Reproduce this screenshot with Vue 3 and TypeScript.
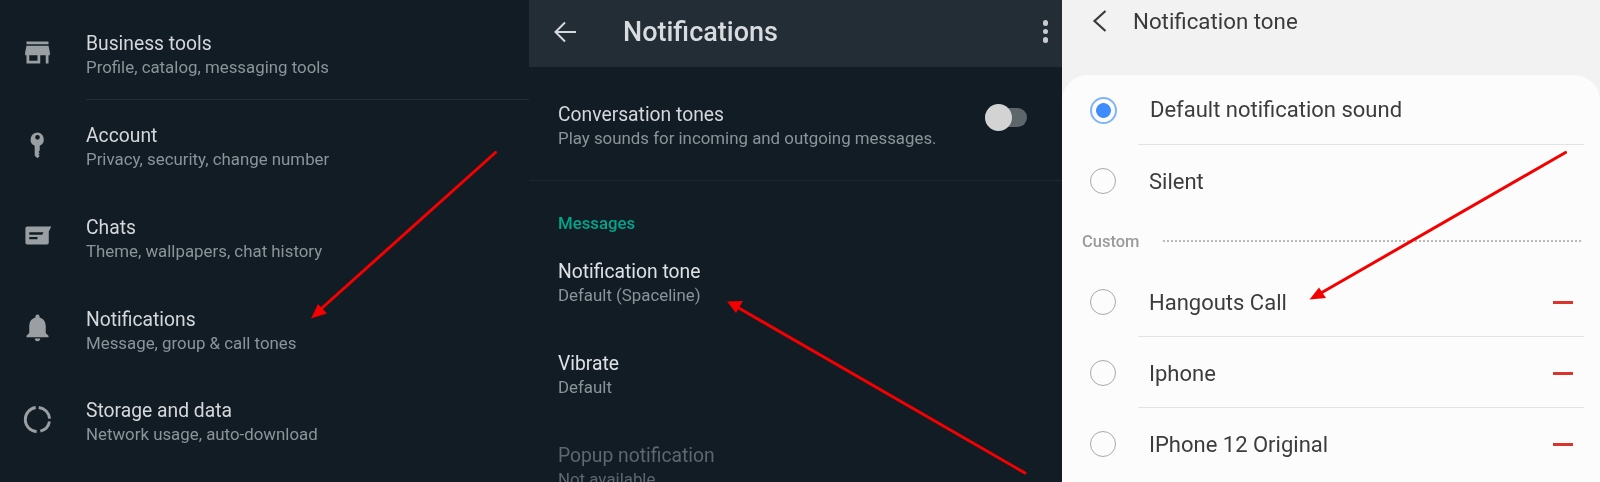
<script setup lang="ts">
interface SettingRow { title: string; sub: string; icon: string }
const settings: SettingRow[] = [
  { title: 'Business tools', sub: 'Profile, catalog, messaging tools', icon: 'store' },
  { title: 'Account', sub: 'Privacy, security, change number', icon: 'key' },
  { title: 'Chats', sub: 'Theme, wallpapers, chat history', icon: 'chat' },
  { title: 'Notifications', sub: 'Message, group & call tones', icon: 'bell' },
  { title: 'Storage and data', sub: 'Network usage, auto-download', icon: 'ring' },
]
const tones = [
  { name: 'Hangouts Call' },
  { name: 'Iphone' },
  { name: 'IPhone 12 Original' },
]
</script>

<template>
  <div class="page">
    <section class="panel left">
      <div v-for="(s, i) in settings" :key="s.title" class="set-row" :class="{ ruled: i === 0 }">
        <div class="set-icon">
          <svg width="33" height="33" viewBox="0 0 24 24" fill="#9a9fa3">
            <path v-if="s.icon === 'store'" fill-rule="evenodd" d="M4 4h16v2H4zM20 7H4l-1 5v2h1v6h10v-6h4v6h2v-6h1v-2zM12 18H6v-4h6z" />
            <path v-else-if="s.icon === 'key'" fill-rule="evenodd" d="M12 3.2a5.1 5.1 0 0 0-2.1 9.7l.1 7.3 2 1.8 1.6-1.6-.9-1 .9-1-.9-1 .9-1v-3.500A5.100 5.100 0 0 0 12 3.200zM12 5.100a1.700 1.700 0 1 1 0 3.400 1.700 1.700 0 0 1 0-3.400z" />
            <path v-else-if="s.icon === 'chat'" fill-rule="evenodd" d="M4.500 5.500H22l-1.800 3.500v8.200a1.300 1.300 0 0 1-1.300 1.300H4.500a1.300 1.300 0 0 1-1.300-1.300V6.800a1.300 1.300 0 0 1 1.300-1.300zM6 9.700v1.700h9.500l.8-1.700zM6 13v1.700h6V13z" />
            <path v-else-if="s.icon === 'bell'" d="M12 22c1.100 0 2-.9 2-2h-4c0 1.100.9 2 2 2zm6-6v-5c0-3.070-1.630-5.640-4.500-6.320V4c0-.830-.670-1.500-1.500-1.500s-1.500.670-1.500 1.500v.680C7.640 5.360 6 7.920 6 11v5l-2 2v1h16v-1l-2-2z" />
            <g v-else fill="none" stroke="#9a9fa3" stroke-width="2.100">
              <path d="M12.900 3.300a8.800 8.800 0 0 1 7.900 8" />
              <path d="M20.700 13.400a8.800 8.800 0 0 1-6.600 7" />
              <path d="M11.400 20.800A8.800 8.800 0 0 1 10.700 3.300" />
            </g>
          </svg>
        </div>
        <div class="set-text">
          <div class="title">{{ s.title }}</div>
          <div class="sub">{{ s.sub }}</div>
        </div>
      </div>
    </section>

    <section class="panel middle">
      <header class="mid-head">
        <svg class="back" width="24" height="22" viewBox="0 0 24 22" fill="none" stroke="#d6d9db" stroke-width="2">
          <path d="M23 11H3M12 1.500 2.500 11l9.500 9.500" />
        </svg>
        <h1>Notifications</h1>
        <div class="dots"><i></i><i></i><i></i></div>
      </header>
      <div class="conv">
        <div>
          <div class="title">Conversation tones</div>
          <div class="sub">Play sounds for incoming and outgoing messages.</div>
        </div>
        <div class="toggle"><span class="knob"></span></div>
      </div>
      <div class="msgs">
        <div class="group">Messages</div>
        <div class="mid-row">
          <div class="title">Notification tone</div>
          <div class="sub">Default (Spaceline)</div>
        </div>
        <div class="mid-row">
          <div class="title">Vibrate</div>
          <div class="sub">Default</div>
        </div>
        <div class="mid-row off">
          <div class="title">Popup notification</div>
          <div class="sub">Not available</div>
        </div>
      </div>
    </section>

    <section class="panel right">
      <header class="right-head">
        <svg width="16" height="24" viewBox="0 0 16 24" fill="none" stroke="#3a3a3a" stroke-width="2.200">
          <path d="M14.500 2 3.500 12l11 10" />
        </svg>
        <h2>Notification tone</h2>
      </header>
      <div class="card">
        <div class="tone first ruled-tone">
          <span class="radio on"></span>
          <span class="tone-name">Default notification sound</span>
        </div>
        <div class="tone">
          <span class="radio"></span>
          <span class="tone-name">Silent</span>
        </div>
        <div class="custom">
          <span>Custom</span>
          <i></i>
        </div>
        <div v-for="(t, i) in tones" :key="t.name" class="tone" :class="{ 'ruled-tone': i < 2 }">
          <span class="radio"></span>
          <span class="tone-name">{{ t.name }}</span>
          <span class="minus"></span>
        </div>
      </div>
    </section>

    <svg class="arrows" width="1600" height="482" viewBox="0 0 1600 482">
      <g stroke="#f40000" stroke-width="3" stroke-linecap="round" fill="#f40000">
        <path d="M495.500 152.500 322 308" />
        <path d="M1025 473 737 307" />
        <path d="M1565.500 152.500 1321 293" />
      </g>
      <g fill="#f40000">
        <path d="M311 318.500 318 304l9 9.500z" />
        <path d="M727 301.500l16-.5-7 12z" />
        <path d="M1309.500 299.500l9.500-12 7 10.500z" />
      </g>
    </svg>
  </div>
</template>

<style scoped>
.page {
  position: relative;
  display: flex;
  width: 1600px;
  height: 482px;
  overflow: hidden;
  font-family: Roboto, "Liberation Sans", sans-serif;
  background: #111c24;
}
.panel { height: 482px; overflow: hidden; filter: blur(0.6px); }
.left { width: 529px; padding-top: 10px; box-sizing: border-box; background: #111c24; }
.set-row { display: flex; height: 91.75px; align-items: center; position: relative; }
.set-icon { width: 86px; display: flex; justify-content: center; padding-right: 12px; box-sizing: border-box; margin-top: -7px; }
.ruled::after {
  content: "";
  position: absolute;
  left: 86px;
  right: 0;
  top: 89px;
  height: 1px;
  background: #222c33;
}
.title { font-size: 19.300px; line-height: 24px; color: #d5d8da; }
.sub { font-size: 16.850px; line-height: 24px; color: #8b9499; margin-top: -1px; }

.middle { width: 533px; background: #111c24; }
.mid-head {
  height: 67px;
  background: #232d36;
  display: flex;
  align-items: center;
  padding: 0 14px 4px 24px;
  box-sizing: border-box;
}
.mid-head h1 {
  margin: 0 0 0 46px;
  font-size: 27px;
  font-weight: 500;
  color: #d8dcde;
  flex: 1;
}
.dots { display: flex; flex-direction: column; gap: 3px; }
.dots i { width: 5.500px; height: 5.500px; border-radius: 50%; background: #c8ccce; }
.conv {
  height: 114px;
  border-bottom: 1px solid #1e2830;
  display: flex;
  justify-content: space-between;
  padding: 36px 35px 0 29px;
  box-sizing: border-box;
}
.toggle {
  position: relative;
  width: 42px;
  height: 19px;
  margin-top: 5px;
  border-radius: 10px;
  background: #5d666b;
}
.knob {
  position: absolute;
  left: 0;
  top: -4px;
  width: 27px;
  height: 27px;
  border-radius: 50%;
  background: #d3d3d3;
}
.msgs { padding: 32px 0 0 29px; }
.group { font-size: 16.800px; line-height: 20px; font-weight: 500; color: #00a58c; margin-bottom: 27px; }
.mid-row { height: 92px; }
.mid-row .title { color: #dfe2e4; }
.off .title { color: #5d676d; }
.off .sub { color: #5d676d; }

.right { width: 538px; background: #f2f2f2; }
.right-head {
  height: 75px;
  display: flex;
  align-items: flex-start;
  padding: 8px 0 0 29px;
  box-sizing: border-box;
}
.right-head h2 {
  margin: 0 0 0 26px;
  font-size: 22.300px;
  line-height: 26px;
  font-weight: 400;
  color: #3a3a3a;
}
.right-head svg { margin-top: 1px; }
.card {
  height: 407px;
  background: #fcfcfc;
  border-radius: 26px 26px 0 0;
}
.tone {
  position: relative;
  display: flex;
  align-items: center;
  height: 71px;
  padding-left: 28px;
}
.tone.first { height: 70px; }
.ruled-tone::after {
  content: "";
  position: absolute;
  left: 76px;
  right: 16px;
  bottom: 0;
  height: 1px;
  background: #e2e2e2;
}
.radio {
  width: 24px;
  height: 24px;
  border: 1.500px solid #a9a9a9;
  border-radius: 50%;
  box-sizing: content-box;
  flex: none;
}
.radio.on {
  border-color: #7fb3f7;
  border-width: 2px;
  width: 23px;
  height: 23px;
  background: radial-gradient(circle, #3f8cff 0 7px, #fcfcfc 7.800px);
}
.tone-name { margin: 2px 0 0 33px; font-size: 22px; color: #3c3c3c; }
.first .tone-name { margin-top: 0; margin-bottom: 2px; }
.minus { position: absolute; right: 27px; top: 35px; width: 20px; height: 3px; background: #d9352f; }
.custom {
  display: flex;
  align-items: center;
  height: 50px;
  padding: 1px 0 0 20px;
  box-sizing: border-box;
  color: #9b9b9b;
  font-size: 16.500px;
  font-weight: 500;
}
.custom i {
  flex: none;
  width: 418px;
  margin: -1px 0 0 24px;
  border-top: 2px dotted #b9b9b9;
}
.arrows { position: absolute; left: 0; top: 0; pointer-events: none; filter: blur(0.4px); }
.back { flex: none; }
</style>
